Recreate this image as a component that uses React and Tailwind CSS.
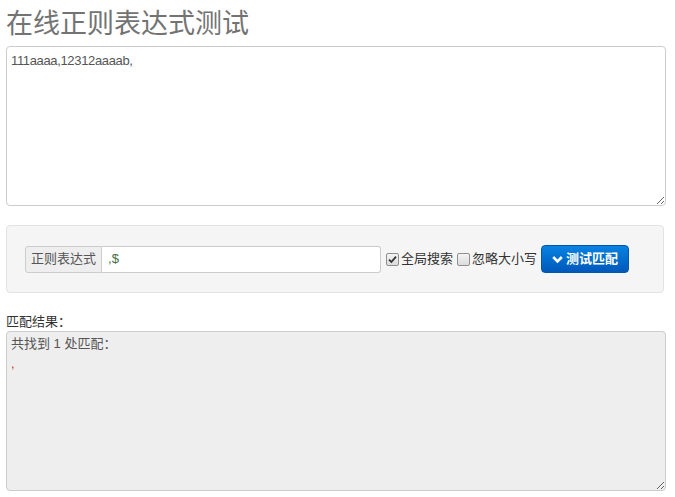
import React from "react";

const font = { fontFamily: '"Liberation Sans", Arial, "Noto Sans CJK SC", sans-serif' };

function Box({ checked }) {
  return (
    <span className="inline-flex items-center justify-center w-[13px] h-[13px] rounded-[2px] border border-[#8f8f8f] bg-gradient-to-b from-[#f4f4f4] to-[#dcdcdc]">
      {checked && (
        <svg width="9" height="9" viewBox="0 0 9 9">
          <path d="M1 4.6 L3.4 7 L8 1.6" fill="none" stroke="#333" strokeWidth="1.8" />
        </svg>
      )}
    </span>
  );
}

export default function App() {
  return (
    <div className="w-[675px] h-[497px] bg-white text-[13px] text-[#333]" style={font}>
      <div className="pl-[6px] w-[666px]">
        <h1 className="h-[46px] pt-[9px] text-[27px] leading-[30px] text-[#737373] font-normal">
          在线正则表达式测试
        </h1>
        <textarea
          className="block w-[660px] h-[160px] border border-[#ccc] rounded-[4px] px-[4px] py-[5px] text-[13px] leading-[18px] text-[#555] tracking-[-0.35px] outline-none resize-y"
          style={font}
          defaultValue="111aaaa,12312aaaab,"
        />
        <div className="mt-[19px] w-[658px] h-[68px] bg-[#f5f5f5] border border-[#e3e3e3] rounded-[4px] flex items-center pl-[18px]">
          <div className="flex h-[27px]">
            <span className="flex items-center px-[5px] bg-[#eee] border border-[#ccc] rounded-l-[3px] text-[#555]">
              正则表达式
            </span>
            <span className="flex items-center w-[279px] pl-[6px] bg-white border border-l-0 border-[#ccc] rounded-r-[3px] text-[#3f6f3f]">
              ,$
            </span>
          </div>
          <div className="flex items-center ml-[5px] gap-[2px]">
            <Box checked />
            <span className="text-[#333]">全局搜索</span>
          </div>
          <div className="flex items-center ml-[4px] gap-[2px]">
            <Box />
            <span className="text-[#333]">忽略大小写</span>
          </div>
          <button className="ml-[4px] h-[28px] w-[88px] flex items-center justify-center gap-[3px] rounded-[4px] border border-[#0157ab] bg-gradient-to-b from-[#0a82e2] to-[#0058ba] text-white text-[13px] font-bold">
            <svg width="11" height="9" viewBox="0 0 11 9">
              <path d="M1.2 2 L5.5 6.3 L9.8 2" fill="none" stroke="#fff" strokeWidth="2.6" />
            </svg>
            <span>测试匹配</span>
          </button>
        </div>
        <div className="mt-[19px] h-[19px] leading-[19px] text-[#333]">匹配结果：</div>
        <div className="w-[660px] h-[160px] bg-[#eee] border border-[#ccc] rounded-[4px] px-[4px] py-[2px] leading-[20px] text-[#555] resize-y overflow-auto">
          <div>共找到 1 处匹配：</div>
          <div className="text-[#d9362f]">,</div>
        </div>
      </div>
    </div>
  );
}
